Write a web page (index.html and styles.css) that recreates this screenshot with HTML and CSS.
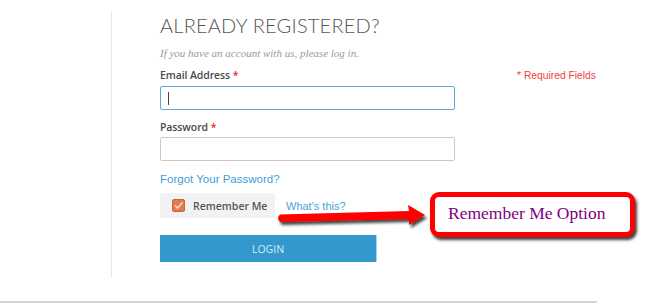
FILE: index.html
```html
<!DOCTYPE html>
<html>
<head>
<meta charset="utf-8">
<link rel="stylesheet" href="styles.css">
</head>
<body>
<div class="page">
  <div class="column">
    <h1 class="title">ALREADY REGISTERED?</h1>
    <p class="intro">If you have an account with us, please log in.</p>
    <div class="form">
      <div class="label-row">
        <label class="label">Email Address <span class="req">*</span></label>
        <span class="required-note">* Required Fields</span>
      </div>
      <div class="input focused"><span class="caret"></span></div>
      <div class="label-row pw">
        <label class="label">Password <span class="req">*</span></label>
      </div>
      <div class="input pw-input"></div>
      <a class="forgot">Forgot Your Password?</a>
      <div class="remember-row">
        <div class="remember">
          <svg class="check" width="13" height="13" viewBox="0 0 13 13">
            <rect x="0.5" y="0.5" width="12" height="12" rx="1.5" fill="#e37b4f" stroke="#c9643b"/>
            <path d="M3 6.5 L5.5 9 L10.5 3.5" fill="none" stroke="#f3d9cc" stroke-width="1.6"/>
          </svg>
          <span class="remember-text">Remember Me</span>
        </div>
        <a class="whats">What's this?</a>
      </div>
      <div class="login">LOGIN</div>
    </div>
  </div>
  <div class="bottom-line"></div>

  <svg class="arrow" width="170" height="40" viewBox="0 0 170 40">
    <defs>
      <filter id="sh" x="-10%" y="-40%" width="130%" height="200%">
        <feGaussianBlur in="SourceAlpha" stdDeviation="1.6"/>
        <feOffset dx="2" dy="3" result="b"/>
        <feComponentTransfer><feFuncA type="linear" slope="0.75"/></feComponentTransfer>
        <feMerge><feMergeNode/><feMergeNode in="SourceGraphic"/></feMerge>
      </filter>
    </defs>
    <path filter="url(#sh)" fill="#ff0000" d="M8 13.5 L137 10 L136 4 L153 14 L137 24 L137 18 L8 21 Q4 17 8 13.5 Z"/>
  </svg>

  <div class="callout"><span>Remember Me Option</span></div>
</div>
</body>
</html>
```
FILE: styles.css
```css
html, body {
  margin: 0;
  padding: 0;
  background: #ffffff;
}
.page {
  position: relative;
  width: 650px;
  height: 305px;
  overflow: hidden;
}
.column {
  margin-left: 111px;
  margin-top: 12px;
  height: 266px;
  border-left: 1px solid #e6e6e6;
  padding-left: 48px;
  box-sizing: border-box;
}
.title {
  margin: 0;
  padding-top: 1px;
  font-family: Lato, "Open Sans", sans-serif;
  font-weight: 300;
  font-size: 20px;
  line-height: 24px;
  letter-spacing: 0.2px;
  color: #555555;
}
.intro {
  margin: 9px 0 0;
  font-family: "Liberation Serif", serif;
  font-style: italic;
  font-size: 11px;
  line-height: 14px;
  color: #9a9a9a;
}
.form {
  width: 436px;
  margin-top: 8px;
}
.label-row {
  display: flex;
  justify-content: space-between;
  align-items: center;
  height: 14px;
}
.label-row.pw {
  margin-top: 10px;
}
.label {
  font-family: "Open Sans", sans-serif;
  font-weight: 600;
  font-size: 10.5px;
  color: #4a4a4a;
  letter-spacing: -0.1px;
}
.req {
  color: #e02b27;
}
.required-note {
  font-family: "Liberation Sans", Arial, sans-serif;
  font-size: 10.3px;
  color: #f0423c;
}
.input {
  width: 295px;
  height: 24px;
  margin-top: 4px;
  border: 1px solid #c9c9c9;
  border-radius: 2px;
  box-sizing: border-box;
  background: #fff;
  display: flex;
  align-items: center;
}
.input.pw-input {
  margin-top: 3px;
}
.input.focused {
  border-color: #5ba9d8;
}
.caret {
  display: block;
  width: 1px;
  height: 13px;
  margin-left: 7px;
  background: #444;
}
.forgot {
  display: block;
  margin-top: 11px;
  font-family: "Liberation Sans", Arial, sans-serif;
  font-size: 11.5px;
  line-height: 14px;
  color: #3d9fd8;
}
.remember-row {
  display: flex;
  align-items: center;
  margin-top: 7px;
}
.remember {
  display: flex;
  align-items: center;
  width: 115px;
  height: 25px;
  background: #f2f2f2;
  box-sizing: border-box;
  padding-left: 12px;
}
.check {
  display: block;
  flex: none;
}
.remember-text {
  margin-left: 8px;
  font-family: "Open Sans", sans-serif;
  font-weight: 600;
  font-size: 10.5px;
  color: #555;
}
.whats {
  margin-left: 11px;
  margin-top: 1px;
  font-family: "Liberation Sans", Arial, sans-serif;
  font-size: 11px;
  color: #4aa3d9;
}
.login {
  width: 217px;
  height: 27px;
  margin-top: 17px;
  background: #3399cc;
  border-right: 1px solid #a9d4ee;
  box-sizing: border-box;
  display: flex;
  align-items: center;
  justify-content: center;
  font-family: "Open Sans", sans-serif;
  font-size: 10.5px;
  color: #d5ecf8;
}
.bottom-line {
  position: absolute;
  left: 0;
  top: 301px;
  width: 597px;
  height: 2px;
  background: #d6d6d6;
}
.arrow {
  position: absolute;
  left: 272px;
  top: 201px;
}
.callout {
  position: absolute;
  left: 430px;
  top: 192px;
  width: 205px;
  height: 45px;
  box-sizing: border-box;
  border: 5px solid #ff0000;
  border-radius: 9px;
  background: #fff;
  box-shadow: 2px 3px 3px rgba(0,0,0,0.75);
  padding-left: 13px;
  display: flex;
  align-items: center;
}
.callout span {
  font-family: "Liberation Serif", serif;
  font-size: 17.5px;
  color: #800080;
  margin-top: -2px;
}
```
